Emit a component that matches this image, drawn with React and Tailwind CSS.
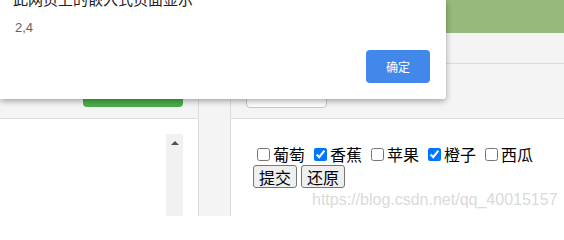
import { useState } from "react";

const fruits = [
    { name: "葡萄", checked: false },
    { name: "香蕉", checked: true },
    { name: "苹果", checked: false },
    { name: "橙子", checked: true },
    { name: "西瓜", checked: false },
];

export default function App() {
    const [items, setItems] = useState(fruits);

    const toggle = (i) => {
        setItems(items.map((f, idx) => (idx === i ? { ...f, checked: !f.checked } : f)));
    };

    return (
        <div className="relative w-[564px] h-[216px] overflow-hidden bg-white font-['Noto_Sans_CJK_SC',sans-serif]">
            {/* page behind the alert */}
            <div className="h-[33px] bg-[#97b97b]"></div>
            <div className="flex h-[183px]">
                {/* left panel */}
                <div className="w-[199px] flex flex-col border-r border-[#dcdcdc]">
                    <div className="h-[86px] bg-[#f4f4f4] border-b border-[#dcdcdc] flex items-end pl-[83px] pb-[11px]">
                        <div className="w-[100px] h-[24px] rounded-[4px] bg-[#4cae4c]"></div>
                    </div>
                    <div className="flex-1 flex justify-end pr-[15px] pt-[15px]">
                        <div className="w-[17px] h-full bg-[#f1f1f1] flex justify-center pt-[7px]">
                            <div className="w-0 h-0 border-x-[4px] border-x-transparent border-b-[4px] border-b-[#505050]"></div>
                        </div>
                    </div>
                </div>
                {/* middle gutter */}
                <div className="w-[32px] bg-[#f4f4f4] border-r border-[#dcdcdc]"></div>
                {/* right panel */}
                <div className="flex-1 flex flex-col">
                    <div className="h-[31px] bg-[#f4f4f4] border-b border-[#dcdcdc]"></div>
                    <div className="h-[55px] bg-[#f4f4f4] border-b border-[#dcdcdc] flex items-end pl-[15px] pb-[10px]">
                        <div className="w-[81px] h-[24px] bg-white border border-[#c8c8c8] rounded-[4px]"></div>
                    </div>
                    <div className="pl-[22px] pt-[26px] text-[16px] leading-[18px] text-black">
                        <div className="flex items-center">
                            {items.map((f, i) => (
                                <label key={f.name} className="flex items-center mr-[5px]">
                                    <input
                                        type="checkbox"
                                        checked={f.checked}
                                        onChange={() => toggle(i)}
                                        className="w-[13px] h-[13px] ml-[4px] mr-[3px] accent-[#0075ff]"
                                    />
                                    <span>{f.name}</span>
                                </label>
                            ))}
                        </div>
                        <div className="flex gap-[4px] mt-[2px]">
                            <button className="h-[23px] px-[5px] border border-[#767676] rounded-[3px] bg-[#efefef] text-[16px] leading-none">提交</button>
                            <button className="h-[23px] px-[5px] border border-[#767676] rounded-[3px] bg-[#efefef] text-[16px] leading-none">还原</button>
                        </div>
                    </div>
                </div>
            </div>

            {/* watermark */}
            <div className="absolute left-[312px] top-[188px] text-[16px] text-[#dadada] font-['Liberation_Sans',sans-serif]">
                https://blog.csdn.net/qq_40015157
            </div>

            {/* alert dialog */}
            <div className="absolute left-0 top-0 w-[446px] h-[99px] bg-white rounded-br-[3px] shadow-[0_2px_6px_rgba(0,0,0,0.35)]">
                <div className="absolute left-[13px] top-[-12px] text-[15px] text-[#202124] whitespace-nowrap">此网页上的嵌入式页面显示</div>
                <div className="absolute left-[15px] top-[18px] text-[13px] text-[#5f6368] font-['Liberation_Sans',sans-serif]">2,4</div>
                <button className="absolute left-[366px] top-[50px] w-[64px] h-[33px] rounded-[4px] bg-[#4288ea] text-white text-[12px]">确定</button>
            </div>
        </div>
    );
}
